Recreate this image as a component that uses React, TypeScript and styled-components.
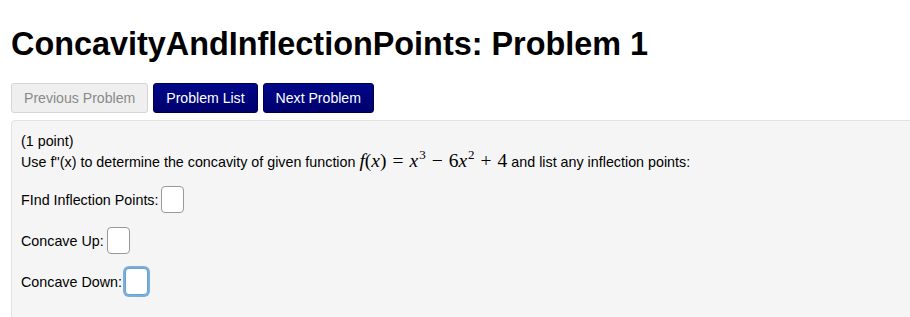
import styled, { createGlobalStyle } from 'styled-components';

const GlobalStyle = createGlobalStyle`
  html, body {
    margin: 0;
    padding: 0;
    background: #fff;
    overflow: hidden;
  }
  body {
    font-family: "Liberation Sans", Arial, sans-serif;
    color: #000;
  }
`;

const Page = styled.div`
  width: 910px;
  height: 317px;
  padding: 0 0 0 11px;
  box-sizing: border-box;
  overflow: hidden;
`;

const Title = styled.h1`
  margin: 0;
  padding-top: 25px;
  font-family: "Liberation Sans", Arial, sans-serif;
  font-weight: bold;
  font-size: 32.4px;
  line-height: 38px;
  white-space: nowrap;
`;

const Nav = styled.div`
  display: flex;
  gap: 5px;
  margin-top: 20px;
`;

const NavButton = styled.button<{ $disabled?: boolean }>`
  height: 30px;
  padding: 0 12px;
  box-sizing: border-box;
  font-family: "Liberation Sans", Arial, sans-serif;
  font-size: 14.1px;
  border-radius: 3px;
  border: 1px solid ${(p) => (p.$disabled ? '#d6d6d6' : '#00004a')};
  background: ${(p) =>
    p.$disabled ? '#efefef' : 'linear-gradient(#00088a, #00006d)'};
  color: ${(p) => (p.$disabled ? '#8a8a8a' : '#fff')};
  cursor: ${(p) => (p.$disabled ? 'default' : 'pointer')};
`;

const Well = styled.div`
  margin-top: 7px;
  width: 940px;
  min-height: 220px;
  box-sizing: border-box;
  background: #f5f5f5;
  border: 1px solid #e3e3e3;
  border-radius: 4px;
  padding: 10px 9px;
  font-size: 14.3px;
  line-height: 20px;
`;

const Line = styled.div``;

const Math = styled.span`
  font-family: "Liberation Serif", "Times New Roman", serif;
  font-size: 19.5px;
  font-style: italic;
  white-space: nowrap;
`;

const Upright = styled.span`
  font-style: normal;
`;

const Op = styled.span`
  font-style: normal;
  margin: 0 6px;
`;

const Sup = styled.sup`
  font-size: 13px;
  font-style: normal;
  vertical-align: 8px;
  line-height: 0;
  margin-left: 1px;
`;

const Field = styled.div<{ $gap: number }>`
  display: flex;
  align-items: center;
  margin-top: ${(p) => p.$gap}px;
`;

const AnswerBox = styled.input<{ $focused?: boolean }>`
  width: 23px;
  height: 27px;
  box-sizing: border-box;
  margin: 0 0 0 3px;
  border-radius: 4px;
  background: #fff;
  border: 1px solid ${(p) => (p.$focused ? '#66a3d9' : '#999')};
  box-shadow: ${(p) => (p.$focused ? '0 0 0 2px rgba(82, 148, 210, 0.75)' : 'none')};
  outline: none;
`;

export default function App() {
  return (
    <>
      <GlobalStyle />
      <Page>
        <Title>ConcavityAndInflectionPoints: Problem 1</Title>
        <Nav>
          <NavButton $disabled>Previous Problem</NavButton>
          <NavButton>Problem List</NavButton>
          <NavButton>Next Problem</NavButton>
        </Nav>
        <Well>
          <Line>(1 point)</Line>
          <Line>
            Use f''(x) to determine the concavity of given function{' '}
            <Math>
              f<Upright>(</Upright>x<Upright>)</Upright>
              <Op>=</Op>x<Sup>3</Sup>
              <Op>−</Op>
              <Upright>6</Upright>x<Sup>2</Sup>
              <Op>+</Op>
              <Upright>4</Upright>
            </Math>{' '}
            and list any inflection points:
          </Line>
          <Field $gap={14}>
            FInd Inflection Points:
            <AnswerBox />
          </Field>
          <Field $gap={14}>
            Concave Up:
            <AnswerBox />
          </Field>
          <Field $gap={14}>
            Concave Down:
            <AnswerBox $focused />
          </Field>
        </Well>
      </Page>
    </>
  );
}
